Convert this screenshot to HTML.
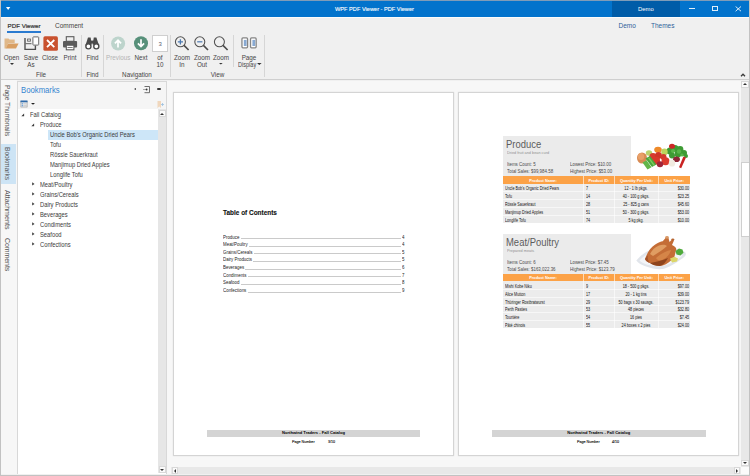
<!DOCTYPE html>
<html><head><meta charset="utf-8">
<style>
*{margin:0;padding:0;box-sizing:border-box}
html,body{width:750px;height:476px;overflow:hidden;background:#f0f0f0;font-family:"Liberation Sans",sans-serif;color:#444}
.a{position:absolute}
.t{position:absolute;white-space:nowrap;line-height:1}
#title{left:0;top:0;width:750px;height:16.5px;background:#0273cc;border-top:1px solid #7f9cb8}
.lbl{font-size:6.3px;color:#454545;text-align:center}
.sep{position:absolute;width:1px;background:#d6d6d6}
.tree{font-size:6.3px;color:#3a3a3a;transform:scaleX(.92);transform-origin:0 0}
</style></head><body>
<!-- window border -->
<div class="a" style="left:0;top:0;width:750px;height:476px;border:1px solid #c2c2c2;border-bottom-width:1.5px;border-top:none;z-index:10"></div>
<!-- title bar -->
<div class="a" id="title"></div>
<div class="a" style="left:611.7px;top:1px;width:68.7px;height:15.5px;background:#005ca8"></div>
<div class="a" style="left:1px;top:16.5px;width:748px;height:1px;background:#fbfbfb"></div>
<div class="t" style="left:335.4px;top:6.2px;font-size:6.2px;color:#fff;-webkit-text-stroke:.12px #fff;transform:scaleX(.91);transform-origin:0 0">WPF PDF Viewer - PDF Viewer</div>
<div class="t" style="left:638px;top:6.8px;font-size:5.9px;color:#fff">Demo</div>
<!-- quick access arrow -->
<svg class="a" style="left:6.2px;top:7.4px" width="5" height="4"><path d="M0 0h4.3L2.15 3z" fill="#fff"/></svg>
<!-- window controls -->
<div class="a" style="left:689.3px;top:8px;width:5.4px;height:.9px;background:rgba(255,255,255,.88)"></div>
<div class="a" style="left:712px;top:5.9px;width:5.9px;height:5px;border:.9px solid rgba(255,255,255,.88)"></div>
<svg class="a" style="left:735px;top:6px" width="7" height="6" viewBox="0 0 7 6"><path d="M.6 .5L6 5.2M6 .5L.6 5.2" stroke="rgba(255,255,255,.9)" stroke-width=".95"/></svg>

<!-- ribbon tabs -->
<div class="t" style="left:7.6px;top:22.8px;font-size:6.2px;color:#333;-webkit-text-stroke:.2px #333">PDF Viewer</div>
<div class="a" style="left:7.3px;top:31px;width:33.7px;height:1.6px;background:#2b7bd0"></div>
<div class="t" style="left:55px;top:22.8px;font-size:6.5px;color:#444">Comment</div>
<div class="t" style="left:618.5px;top:22.5px;font-size:6.5px;color:#2f5f9a">Demo</div>
<div class="t" style="left:651px;top:22.5px;font-size:6.5px;color:#2f5f9a">Themes</div>


<!-- RIBBON ICONS -->
<svg class="a" style="left:0;top:32px" width="270" height="24" viewBox="0 32 270 24">
 <!-- open folder -->
 <path d="M4.5 38.4h4l1 1.2h5.2v3.4H8.2L6 48.5H4.5z" fill="#e0b889"/>
 <path d="M8 43.5h10.6L16 48.5H5.8z" fill="#d99f62"/>
 <!-- save as -->
 <path d="M24.3 38.1h1.4v10.6h9v-3.2h1.4v4.6H24.3z" fill="#505050"/>
 <rect x="27.2" y="38.6" width="3.6" height="3" fill="#5a5a5a"/>
 <rect x="28.2" y="39.4" width="1.6" height="1.4" fill="#fff"/>
 <rect x="25.5" y="43.2" width="6" height="1" fill="#5a5a5a"/>
 <rect x="32.9" y="36.9" width="5.8" height="8.2" rx=".6" fill="#fff" stroke="#6a6a6a" stroke-width="1"/>
 <!-- close -->
 <rect x="43.4" y="36.3" width="14.5" height="14.5" rx="1.6" fill="#c9522f"/>
 <path d="M47 40l7.3 7.1M54.3 40L47 47.1" stroke="#fff" stroke-width="1.8"/>
 <!-- print -->
 <rect x="66.3" y="36.7" width="7.6" height="4.6" fill="none" stroke="#5c5c5c" stroke-width="1.1"/>
 <rect x="63" y="41" width="14.1" height="6.6" rx="1" fill="#5c5c5c"/>
 <rect x="66.3" y="45.2" width="7.6" height="4.6" fill="#fff" stroke="#5c5c5c" stroke-width="1.1"/>
 <rect x="67.5" y="47" width="5.2" height=".8" fill="#5c5c5c"/>
 <!-- binoculars -->
 <path d="M88 37.6h2.6l1.2 7-6.4.8z" fill="#4a4a4a"/>
 <path d="M93.8 37.6h2.6l2.6 7.8-6.4-.8z" fill="#4a4a4a"/>
 <rect x="90.8" y="40.6" width="3.2" height="3" fill="#4a4a4a"/>
 <circle cx="88.4" cy="46.3" r="2.55" fill="#fff" stroke="#4a4a4a" stroke-width="1.4"/>
 <circle cx="96.3" cy="46.3" r="2.55" fill="#fff" stroke="#4a4a4a" stroke-width="1.4"/>
 <!-- previous -->
 <circle cx="118.1" cy="43.5" r="7" fill="#bdd4cc"/>
 <path d="M118 47.6v-7M114.9 43.4l3.1-3.1 3.1 3.1" stroke="#fff" stroke-width="1.7" fill="none"/>
 <!-- next -->
 <circle cx="141" cy="43.3" r="7" fill="#57907a"/>
 <path d="M141 39.2v7M137.9 43.4l3.1 3.1 3.1-3.1" stroke="#fff" stroke-width="1.7" fill="none"/>
 <!-- page box -->
 <rect x="152.5" y="35.5" width="15" height="16" fill="#fff" stroke="#cfcfcf" stroke-width="1"/>
 <!-- zoom in -->
 <circle cx="180.4" cy="41.8" r="5" fill="none" stroke="#505050" stroke-width="1.05"/>
 <path d="M184 45.4l4.6 4.6" stroke="#4a4a4a" stroke-width="1.6"/>
 <path d="M180.4 39.2v5.2M177.8 41.8h5.2" stroke="#4a78b0" stroke-width="1.3"/>
 <!-- zoom out -->
 <circle cx="199.8" cy="41.8" r="5" fill="none" stroke="#505050" stroke-width="1.05"/>
 <path d="M203.4 45.4l4.6 4.6" stroke="#4a4a4a" stroke-width="1.6"/>
 <path d="M197.2 41.8h5.2" stroke="#5a82b4" stroke-width="1.3"/>
 <!-- zoom -->
 <circle cx="219.4" cy="41.8" r="5" fill="none" stroke="#505050" stroke-width="1.05"/>
 <path d="M223 45.4l4.6 4.6" stroke="#4a4a4a" stroke-width="1.6"/>
 <!-- page display -->
 <rect x="241.95" y="37.9" width="5.6" height="9.9" rx="1" fill="#fff" stroke="#858585" stroke-width="1.3"/>
 <rect x="250.55" y="37.9" width="5.6" height="9.9" rx="1" fill="#fff" stroke="#858585" stroke-width="1.3"/>
 <rect x="243.8" y="39.9" width="2.8" height="6.1" fill="#88a9d2"/>
 <rect x="252.4" y="39.9" width="2.8" height="6.1" fill="#88a9d2"/>
</svg>
<div class="t" style="left:158.4px;top:41px;font-size:6px;color:#5a6070">3</div>
<!-- separators -->
<div class="sep" style="left:81px;top:35px;height:42px"></div>
<div class="sep" style="left:103px;top:35px;height:42px"></div>
<div class="sep" style="left:170px;top:35px;height:42px"></div>
<div class="sep" style="left:233px;top:35px;height:32px"></div>
<div class="sep" style="left:264px;top:35px;height:42px"></div>
<!-- labels -->
<div class="t lbl" style="left:1px;width:21px;top:54.5px">Open</div>
<svg class="a" style="left:9.6px;top:62.9px" width="5" height="3"><path d="M0 0h4L2 2.1z" fill="#333"/></svg>
<div class="t lbl" style="left:21px;width:20px;top:54.5px">Save</div><div class="t lbl" style="left:21px;width:20px;top:61.5px">As</div>
<div class="t lbl" style="left:40px;width:20px;top:54.5px">Close</div>
<div class="t lbl" style="left:60px;width:20px;top:54.5px">Print</div>
<div class="t lbl" style="left:1px;width:80px;top:71.5px">File</div>
<div class="t lbl" style="left:82px;width:21px;top:54.5px">Find</div>
<div class="t lbl" style="left:82px;width:21px;top:71.5px">Find</div>
<div class="t lbl" style="left:106px;width:24px;top:54.5px;color:#b4b4b4">Previous</div>
<div class="t lbl" style="left:131px;width:20px;top:54.5px">Next</div>
<div class="t lbl" style="left:150px;width:20px;top:54.5px">of</div><div class="t lbl" style="left:150px;width:20px;top:61.5px">10</div>
<div class="t lbl" style="left:104px;width:66px;top:71.5px">Navigation</div>
<div class="t lbl" style="left:172px;width:20px;top:54.5px">Zoom</div><div class="t lbl" style="left:172px;width:20px;top:61.5px">In</div>
<div class="t lbl" style="left:192px;width:20px;top:54.5px">Zoom</div><div class="t lbl" style="left:192px;width:20px;top:61.5px">Out</div>
<div class="t lbl" style="left:211px;width:20px;top:54.5px">Zoom</div>
<svg class="a" style="left:219.3px;top:62.8px" width="4" height="3"><path d="M0 0h3.7L1.85 1.6z" fill="#333"/></svg>
<div class="t lbl" style="left:171px;width:93px;top:71.5px">View</div>
<div class="t lbl" style="left:236px;width:26px;top:54.5px">Page</div>
<div class="t lbl" style="left:238px;top:61.5px;text-align:left;transform:scaleX(.88);transform-origin:0 0">Display</div>
<svg class="a" style="left:256.5px;top:63.3px" width="5" height="3"><path d="M0 0h4.6L2.3 1.9z" fill="#333"/></svg>
<!-- collapse chevron -->
<svg class="a" style="left:739.5px;top:71.5px" width="7" height="6"><path d="M1 4.2L3 2.2 5 4.2" stroke="#3a3a3a" stroke-width="1.3" fill="none"/></svg>

<!-- ribbon bottom line -->
<div class="a" style="left:1px;top:79px;width:748px;height:1px;background:#cfcfcf"></div>


<!-- LEFT TAB STRIP -->
<div class="a" style="left:1px;top:80px;width:16px;height:394px;background:#f7f7f7"></div>
<div class="a" style="left:1px;top:143.5px;width:15px;height:40px;background:#cde4f5"></div>
<div class="t" style="left:4.5px;top:85px;font-size:6.6px;color:#555;transform-origin:0 0;transform:translate(5px,0) rotate(90deg)">Page Thumbnails</div>
<div class="t" style="left:4.5px;top:147px;font-size:6.6px;color:#555;transform-origin:0 0;transform:translate(5px,0) rotate(90deg)">Bookmarks</div>
<div class="t" style="left:4.5px;top:189.5px;font-size:7.1px;color:#555;transform-origin:0 0;transform:translate(5px,0) rotate(90deg)">Attachments</div>
<div class="t" style="left:4.5px;top:238px;font-size:6.9px;color:#555;transform-origin:0 0;transform:translate(5px,0) rotate(90deg)">Comments</div>

<!-- BOOKMARKS PANEL -->
<div class="a" style="left:17px;top:81px;width:150px;height:393px;border:1px solid #d8d8d8;border-bottom:none;background:#fff"></div>
<div class="a" style="left:18px;top:82px;width:148px;height:27px;background:#f5f5f5"></div>
<div class="t" style="left:20.5px;top:86.3px;font-size:8.6px;color:#3585d0;transform:scaleX(.9);transform-origin:0 0">Bookmarks</div>
<!-- header icons -->
<div class="a" style="left:133.8px;top:87.6px;border-top:1.6px solid transparent;border-bottom:1.6px solid transparent;border-right:2.2px solid #333"></div>
<svg class="a" style="left:142px;top:85px" width="10" height="9"><path d="M2.5 1.5h5v6.2h-5" fill="none" stroke="#606060" stroke-width=".9"/><path d="M1 4.5h4" stroke="#888" stroke-width=".7"/><circle cx="4.6" cy="4.5" r=".9" fill="#333"/></svg>
<div class="a" style="left:156.8px;top:88px;width:4.2px;height:2.4px;border-radius:1px;background:#3a3a3a"></div>
<!-- toolbar icon -->
<svg class="a" style="left:19.5px;top:99.5px" width="9" height="8" viewBox="0 0 9 8"><rect x=".5" y=".5" width="7" height="6.8" fill="#eeeeee"/><path d="M.8 1v6.2M7.2 1v6.2M.8 7.1h6.4" stroke="#9a9a9a" stroke-width=".6"/><rect x=".5" y=".5" width="7" height="1.8" fill="#2f6aaa"/><rect x="1.6" y="3.3" width="1.6" height="1.1" fill="#5b95d0"/><rect x="1.6" y="5.2" width="1.6" height="1.1" fill="#5b95d0"/><path d="M3.8 3.85h2.8M3.8 5.75h2.8" stroke="#b0b0b0" stroke-width=".6"/></svg>
<svg class="a" style="left:31px;top:102.6px" width="5" height="3"><path d="M0 0h4L2 1.7z" fill="#222"/></svg>
<svg class="a" style="left:156px;top:100px" width="9" height="9"><path d="M1.5 1h3.5v7L3.3 6.5 1.5 8z" fill="#f0d7bd"/><path d="M5 4.5h3M6.5 3v3" stroke="#9cc0e0" stroke-width=".8"/></svg>

<!-- panel scrollbar -->
<div class="a" style="left:158px;top:109px;width:8px;height:364px;background:#e6e6e6"></div>
<div class="a" style="left:158.5px;top:110px;width:7px;height:7px;background:#fafafa;border:.5px solid #d8d8d8"></div>
<div class="a" style="left:160px;top:112.5px;border-left:2px solid transparent;border-right:2px solid transparent;border-bottom:2px solid #333"></div>
<div class="a" style="left:158.5px;top:466px;width:7px;height:7px;background:#fafafa;border:.5px solid #d8d8d8"></div>
<div class="a" style="left:160px;top:468.5px;border-left:2px solid transparent;border-right:2px solid transparent;border-top:2px solid #333"></div>

<!-- tree -->
<div class="a" style="left:47.5px;top:130px;width:110.5px;height:9.5px;background:#cde6f8"></div>
<div class="t tree" style="left:29.6px;top:111.5px">Fall Catalog</div>
<div class="t tree" style="left:39.6px;top:121.5px">Produce</div>
<div class="t tree" style="left:49.6px;top:131.5px">Uncle Bob's Organic Dried Pears</div>
<div class="t tree" style="left:49.6px;top:141.5px">Tofu</div>
<div class="t tree" style="left:49.6px;top:151.5px">R&ouml;ssle Sauerkraut</div>
<div class="t tree" style="left:49.6px;top:161.5px">Manjimup Dried Apples</div>
<div class="t tree" style="left:49.6px;top:171.5px">Longlife Tofu</div>
<div class="t tree" style="left:39.6px;top:181.5px">Meat/Poultry</div>
<div class="t tree" style="left:39.6px;top:191.5px">Grains/Cereals</div>
<div class="t tree" style="left:39.6px;top:201.5px">Dairy Products</div>
<div class="t tree" style="left:39.6px;top:211.5px">Beverages</div>
<div class="t tree" style="left:39.6px;top:221.5px">Condiments</div>
<div class="t tree" style="left:39.6px;top:231.5px">Seafood</div>
<div class="t tree" style="left:39.6px;top:241.5px">Confections</div>

<svg class="a" style="left:21px;top:112.6px" width="4" height="4"><path d="M0.3 3.3L3.1 0.4V3.3z" fill="#3a3a3a"/></svg>
<svg class="a" style="left:31px;top:122.6px" width="4" height="4"><path d="M0.3 3.3L3.1 0.4V3.3z" fill="#3a3a3a"/></svg>
<svg class="a" style="left:31.6px;top:182.4px" width="4" height="5"><path d="M0.2 0.2L2.5 1.9 0.2 3.6z" fill="#3a3a3a"/></svg>
<svg class="a" style="left:31.6px;top:192.4px" width="4" height="5"><path d="M0.2 0.2L2.5 1.9 0.2 3.6z" fill="#3a3a3a"/></svg>
<svg class="a" style="left:31.6px;top:202.4px" width="4" height="5"><path d="M0.2 0.2L2.5 1.9 0.2 3.6z" fill="#3a3a3a"/></svg>
<svg class="a" style="left:31.6px;top:212.4px" width="4" height="5"><path d="M0.2 0.2L2.5 1.9 0.2 3.6z" fill="#3a3a3a"/></svg>
<svg class="a" style="left:31.6px;top:222.4px" width="4" height="5"><path d="M0.2 0.2L2.5 1.9 0.2 3.6z" fill="#3a3a3a"/></svg>
<svg class="a" style="left:31.6px;top:232.4px" width="4" height="5"><path d="M0.2 0.2L2.5 1.9 0.2 3.6z" fill="#3a3a3a"/></svg>
<svg class="a" style="left:31.6px;top:242.4px" width="4" height="5"><path d="M0.2 0.2L2.5 1.9 0.2 3.6z" fill="#3a3a3a"/></svg>
<!-- DOC AREA -->
<div class="a" style="left:167px;top:81px;width:582px;height:393px;background:#f7f7f7"></div>
<!-- v scrollbar -->
<div class="a" style="left:741px;top:81px;width:8px;height:386px;background:#e8e8e8"></div>
<div class="a" style="left:741px;top:80.5px;width:8px;height:7px;background:#fafafa;border:.5px solid #d8d8d8"></div>
<div class="a" style="left:743px;top:83px;border-left:2px solid transparent;border-right:2px solid transparent;border-bottom:2px solid #333"></div>
<div class="a" style="left:741px;top:162px;width:8.5px;height:74.5px;background:#fff;border:1px solid #cfcfcf"></div>
<div class="a" style="left:741px;top:459.5px;width:8px;height:6.5px;background:#fafafa;border:.5px solid #d8d8d8"></div>
<div class="a" style="left:743px;top:462px;border-left:2px solid transparent;border-right:2px solid transparent;border-top:2px solid #333"></div>
<!-- h scrollbar -->
<div class="a" style="left:171px;top:467px;width:570px;height:7px;background:#e8e8e8"></div>
<div class="a" style="left:171.5px;top:467px;width:6.5px;height:7px;background:#fafafa;border:.5px solid #d8d8d8"></div>
<div class="a" style="left:173.5px;top:468.5px;border-top:2px solid transparent;border-bottom:2px solid transparent;border-right:2px solid #333"></div>
<div class="a" style="left:733.5px;top:467px;width:6.5px;height:7px;background:#fafafa;border:.5px solid #d8d8d8"></div>
<div class="a" style="left:736px;top:468.5px;border-top:2px solid transparent;border-bottom:2px solid transparent;border-left:2px solid #333"></div>
<div class="a" style="left:741px;top:467px;width:8px;height:7px;background:#fbfbfb"></div>

<!-- PAGES -->
<div class="a" style="left:173px;top:92px;width:281px;height:364px;background:#fff;border:1px solid #d4d4d4;box-shadow:0 0 1.5px rgba(0,0,0,.1)"></div>
<div class="a" style="left:458px;top:92px;width:281px;height:364px;background:#fff;border:1px solid #d4d4d4;box-shadow:0 0 1.5px rgba(0,0,0,.1)"></div>
<!-- PAGE1CONTENT -->
<div class="t" style="left:223.00px;top:208.90px;font-size:7px;font-weight:bold;color:#111;transform:scaleX(0.92);transform-origin:0 0;-webkit-text-stroke:.12px #111">Table of Contents</div>
<div class="t" style="left:223.00px;top:234.50px;font-size:5.2px;font-weight:normal;color:#222;transform:scaleX(0.85);transform-origin:0 0;">Produce</div>
<div class="a" style="left:240.73px;top:238.20px;width:160.47px;height:.75px;background:#cacaca"></div>
<div class="t" style="left:401.60px;top:234.50px;font-size:5.2px;font-weight:normal;color:#222;transform:scaleX(0.85);transform-origin:0 0;">4</div>
<div class="t" style="left:223.00px;top:242.13px;font-size:5.2px;font-weight:normal;color:#222;transform:scaleX(0.85);transform-origin:0 0;">Meat/Poultry</div>
<div class="a" style="left:249.06px;top:245.83px;width:152.14px;height:.75px;background:#cacaca"></div>
<div class="t" style="left:401.60px;top:242.13px;font-size:5.2px;font-weight:normal;color:#222;transform:scaleX(0.85);transform-origin:0 0;">4</div>
<div class="t" style="left:223.00px;top:249.76px;font-size:5.2px;font-weight:normal;color:#222;transform:scaleX(0.85);transform-origin:0 0;">Grains/Cereals</div>
<div class="a" style="left:253.72px;top:253.46px;width:147.48px;height:.75px;background:#cacaca"></div>
<div class="t" style="left:401.60px;top:249.76px;font-size:5.2px;font-weight:normal;color:#222;transform:scaleX(0.85);transform-origin:0 0;">5</div>
<div class="t" style="left:223.00px;top:257.39px;font-size:5.2px;font-weight:normal;color:#222;transform:scaleX(0.85);transform-origin:0 0;">Dairy Products</div>
<div class="a" style="left:253.23px;top:261.09px;width:147.97px;height:.75px;background:#cacaca"></div>
<div class="t" style="left:401.60px;top:257.39px;font-size:5.2px;font-weight:normal;color:#222;transform:scaleX(0.85);transform-origin:0 0;">5</div>
<div class="t" style="left:223.00px;top:265.02px;font-size:5.2px;font-weight:normal;color:#222;transform:scaleX(0.85);transform-origin:0 0;">Beverages</div>
<div class="a" style="left:245.39px;top:268.72px;width:155.81px;height:.75px;background:#cacaca"></div>
<div class="t" style="left:401.60px;top:265.02px;font-size:5.2px;font-weight:normal;color:#222;transform:scaleX(0.85);transform-origin:0 0;">6</div>
<div class="t" style="left:223.00px;top:272.65px;font-size:5.2px;font-weight:normal;color:#222;transform:scaleX(0.85);transform-origin:0 0;">Condiments</div>
<div class="a" style="left:247.83px;top:276.35px;width:153.37px;height:.75px;background:#cacaca"></div>
<div class="t" style="left:401.60px;top:272.65px;font-size:5.2px;font-weight:normal;color:#222;transform:scaleX(0.85);transform-origin:0 0;">7</div>
<div class="t" style="left:223.00px;top:280.28px;font-size:5.2px;font-weight:normal;color:#222;transform:scaleX(0.85);transform-origin:0 0;">Seafood</div>
<div class="a" style="left:240.73px;top:283.98px;width:160.47px;height:.75px;background:#cacaca"></div>
<div class="t" style="left:401.60px;top:280.28px;font-size:5.2px;font-weight:normal;color:#222;transform:scaleX(0.85);transform-origin:0 0;">8</div>
<div class="t" style="left:223.00px;top:287.91px;font-size:5.2px;font-weight:normal;color:#222;transform:scaleX(0.85);transform-origin:0 0;">Confections</div>
<div class="a" style="left:247.60px;top:291.61px;width:153.60px;height:.75px;background:#cacaca"></div>
<div class="t" style="left:401.60px;top:287.91px;font-size:5.2px;font-weight:normal;color:#222;transform:scaleX(0.85);transform-origin:0 0;">9</div>
<div class="a" style="left:206.7px;top:430px;width:213.5px;height:6.6px;background:#d4d4d4"></div>
<div class="t" style="left:213.50px;width:200px;text-align:center;top:431.20px;font-size:4.1px;font-weight:bold;color:#000;">Northwind Traders - Fall Catalog</div>
<div class="t" style="left:292.00px;top:440.00px;font-size:4.2px;font-weight:normal;color:#000;transform:scaleX(0.876);transform-origin:0 0;-webkit-text-stroke:.1px #000">Page Number</div>
<div class="t" style="left:328.00px;top:440.00px;font-size:4.2px;font-weight:normal;color:#000;transform:scaleX(0.876);transform-origin:0 0;-webkit-text-stroke:.1px #000">3/10</div>
<!-- PAGE2CONTENT -->
<div class="a" style="left:502.5px;top:136.4px;width:128.5px;height:39.6px;background:#ebebeb"></div>
<div class="t" style="left:506.40px;top:138.70px;font-size:10.5px;font-weight:normal;color:#5c5c5c;transform:scaleX(0.9);transform-origin:0 0;">Produce</div>
<div class="t" style="left:506.70px;top:150.80px;font-size:4.4px;font-weight:normal;color:#909090;transform:scaleX(0.87);transform-origin:0 0;">Dried fruit and bean curd</div>
<div class="t" style="left:506.70px;top:161.60px;font-size:5.2px;font-weight:normal;color:#4a4a4a;transform:scaleX(0.85);transform-origin:0 0;">Items Count: 5</div>
<div class="t" style="left:506.70px;top:168.70px;font-size:5.2px;font-weight:normal;color:#4a4a4a;transform:scaleX(0.85);transform-origin:0 0;">Total Sales: $99,984.58</div>
<div class="t" style="left:570.10px;top:161.60px;font-size:5.2px;font-weight:normal;color:#4a4a4a;transform:scaleX(0.85);transform-origin:0 0;">Lowest Price: $10.00</div>
<div class="t" style="left:570.10px;top:168.70px;font-size:5.2px;font-weight:normal;color:#4a4a4a;transform:scaleX(0.85);transform-origin:0 0;">Highest Price: $53.00</div>
<div class="a" style="left:502.7px;top:176.0px;width:187.5px;height:46.85px;background:#ececec"></div>
<div class="a" style="left:502.7px;top:176.0px;width:187.5px;height:7.6px;background:#fca247"></div>
<div class="t" style="left:443.00px;width:200px;text-align:center;top:178.60px;font-size:3.9px;font-weight:bold;color:#fff;">Product Name:</div>
<div class="t" style="left:498.90px;width:200px;text-align:center;top:178.60px;font-size:3.9px;font-weight:bold;color:#fff;">Product ID:</div>
<div class="t" style="left:536.45px;width:200px;text-align:center;top:178.60px;font-size:3.9px;font-weight:bold;color:#fff;">Quantity Per Unit:</div>
<div class="t" style="left:574.30px;width:200px;text-align:center;top:178.60px;font-size:3.9px;font-weight:bold;color:#fff;">Unit Price:</div>
<div class="a" style="left:582.9px;top:176.0px;width:.8px;height:46.85px;background:rgba(255,255,255,.6)"></div>
<div class="a" style="left:614.1px;top:176.0px;width:.8px;height:46.85px;background:rgba(255,255,255,.6)"></div>
<div class="a" style="left:658.0px;top:176.0px;width:.8px;height:46.85px;background:rgba(255,255,255,.6)"></div>
<div class="t" style="left:505.30px;top:187.10px;font-size:4.7px;font-weight:normal;color:#111;transform:scaleX(0.79);transform-origin:0 0;">Uncle Bob's Organic Dried Pears</div>
<div class="t" style="left:585.90px;top:187.10px;font-size:4.7px;font-weight:normal;color:#111;transform:scaleX(0.79);transform-origin:0 0;">7</div>
<div class="t" style="left:536.45px;width:200px;text-align:center;top:187.10px;font-size:4.7px;font-weight:normal;color:#111;transform:scaleX(0.79);transform-origin:50% 0;">12 - 1 lb pkgs.</div>
<div class="t" style="left:488.60px;width:200px;text-align:right;top:187.10px;font-size:4.7px;font-weight:normal;color:#111;transform:scaleX(0.79);transform-origin:100% 0;">$30.00</div>
<div class="a" style="left:502.7px;top:191.10px;width:187.5px;height:.8px;background:rgba(255,255,255,.6)"></div>
<div class="t" style="left:505.30px;top:194.95px;font-size:4.7px;font-weight:normal;color:#111;transform:scaleX(0.79);transform-origin:0 0;">Tofu</div>
<div class="t" style="left:585.90px;top:194.95px;font-size:4.7px;font-weight:normal;color:#111;transform:scaleX(0.79);transform-origin:0 0;">14</div>
<div class="t" style="left:536.45px;width:200px;text-align:center;top:194.95px;font-size:4.7px;font-weight:normal;color:#111;transform:scaleX(0.79);transform-origin:50% 0;">40 - 100 g pkgs.</div>
<div class="t" style="left:488.60px;width:200px;text-align:right;top:194.95px;font-size:4.7px;font-weight:normal;color:#111;transform:scaleX(0.79);transform-origin:100% 0;">$23.25</div>
<div class="a" style="left:502.7px;top:198.95px;width:187.5px;height:.8px;background:rgba(255,255,255,.6)"></div>
<div class="t" style="left:505.30px;top:202.80px;font-size:4.7px;font-weight:normal;color:#111;transform:scaleX(0.79);transform-origin:0 0;">R&ouml;ssle Sauerkraut</div>
<div class="t" style="left:585.90px;top:202.80px;font-size:4.7px;font-weight:normal;color:#111;transform:scaleX(0.79);transform-origin:0 0;">28</div>
<div class="t" style="left:536.45px;width:200px;text-align:center;top:202.80px;font-size:4.7px;font-weight:normal;color:#111;transform:scaleX(0.79);transform-origin:50% 0;">25 - 825 g cans</div>
<div class="t" style="left:488.60px;width:200px;text-align:right;top:202.80px;font-size:4.7px;font-weight:normal;color:#111;transform:scaleX(0.79);transform-origin:100% 0;">$45.60</div>
<div class="a" style="left:502.7px;top:206.80px;width:187.5px;height:.8px;background:rgba(255,255,255,.6)"></div>
<div class="t" style="left:505.30px;top:210.65px;font-size:4.7px;font-weight:normal;color:#111;transform:scaleX(0.79);transform-origin:0 0;">Manjimup Dried Apples</div>
<div class="t" style="left:585.90px;top:210.65px;font-size:4.7px;font-weight:normal;color:#111;transform:scaleX(0.79);transform-origin:0 0;">51</div>
<div class="t" style="left:536.45px;width:200px;text-align:center;top:210.65px;font-size:4.7px;font-weight:normal;color:#111;transform:scaleX(0.79);transform-origin:50% 0;">50 - 300 g pkgs.</div>
<div class="t" style="left:488.60px;width:200px;text-align:right;top:210.65px;font-size:4.7px;font-weight:normal;color:#111;transform:scaleX(0.79);transform-origin:100% 0;">$53.00</div>
<div class="a" style="left:502.7px;top:214.65px;width:187.5px;height:.8px;background:rgba(255,255,255,.6)"></div>
<div class="t" style="left:505.30px;top:218.50px;font-size:4.7px;font-weight:normal;color:#111;transform:scaleX(0.79);transform-origin:0 0;">Longlife Tofu</div>
<div class="t" style="left:585.90px;top:218.50px;font-size:4.7px;font-weight:normal;color:#111;transform:scaleX(0.79);transform-origin:0 0;">74</div>
<div class="t" style="left:536.45px;width:200px;text-align:center;top:218.50px;font-size:4.7px;font-weight:normal;color:#111;transform:scaleX(0.79);transform-origin:50% 0;">5 kg pkg.</div>
<div class="t" style="left:488.60px;width:200px;text-align:right;top:218.50px;font-size:4.7px;font-weight:normal;color:#111;transform:scaleX(0.79);transform-origin:100% 0;">$10.00</div>
<svg class="a" style="left:625px;top:135px" width="70" height="40" viewBox="625 135 70 40">
<!-- parsley back -->
<g fill="#3e9b34">
<circle cx="670" cy="151" r="3.6"/><circle cx="675" cy="148.5" r="3.6"/><circle cx="680" cy="149.5" r="3.4"/><circle cx="684" cy="153" r="3"/><circle cx="678" cy="154" r="3.4"/><circle cx="672" cy="155.5" r="3"/><circle cx="686" cy="156" r="2"/>
</g>
<g fill="#58b548"><circle cx="673" cy="151" r="2"/><circle cx="679" cy="151.5" r="2.2"/><circle cx="682" cy="155" r="1.6"/></g>
<ellipse cx="672" cy="146.2" rx="3" ry="2.5" fill="#cc2727"/>
<!-- peppers -->
<ellipse cx="658" cy="149.8" rx="3.8" ry="3" fill="#ee8a2a"/>
<ellipse cx="664.5" cy="152" rx="3.2" ry="3.4" fill="#bcd65c"/>
<ellipse cx="649" cy="153" rx="3.2" ry="2.8" fill="#b8d36c"/>
<!-- onion -->
<ellipse cx="642" cy="158" rx="5" ry="5.6" fill="#d88a52"/>
<ellipse cx="641" cy="156.5" rx="3.2" ry="3.6" fill="#e8a068"/>
<!-- tomatoes -->
<circle cx="653" cy="156.5" r="3.6" fill="#d63a2c"/>
<circle cx="658.5" cy="155.5" r="3.4" fill="#cf3526"/>
<circle cx="663.5" cy="157" r="3" fill="#d23a2c"/>
<circle cx="656" cy="160.5" r="4" fill="#d8392a"/>
<circle cx="665.5" cy="161.2" r="4" fill="#dc3b2e"/>
<ellipse cx="660" cy="164.2" rx="3.2" ry="3" fill="#a0263a"/>
<ellipse cx="676.5" cy="159.2" rx="3.4" ry="2.8" fill="#8e2635"/>
<ellipse cx="672" cy="163.2" rx="3.2" ry="3.4" fill="#f0ebe0"/>
<!-- cucumbers -->
<path d="M645.5 158.5l4.5-2.4 6.4 8.4-4.4 2.6z" fill="#4aa63b"/>
<path d="M642.5 162.5l4-2.2 5 7-4 2.2z" fill="#62b548"/>
<path d="M648 158l1.2-.6 5.6 7.6-1.2.7z" fill="#7fca5e"/>
<!-- chili -->
<path d="M683.4 156.4l2.6 1.2-4.8 10.6-2.2-1z" fill="#c92322"/>
</svg>
<div class="a" style="left:502.5px;top:234.2px;width:128.5px;height:39.6px;background:#ebebeb"></div>
<div class="t" style="left:506.40px;top:236.50px;font-size:10.5px;font-weight:normal;color:#5c5c5c;transform:scaleX(0.9);transform-origin:0 0;">Meat/Poultry</div>
<div class="t" style="left:506.70px;top:248.60px;font-size:4.4px;font-weight:normal;color:#909090;transform:scaleX(0.87);transform-origin:0 0;">Prepared meats</div>
<div class="t" style="left:506.70px;top:260.10px;font-size:5.2px;font-weight:normal;color:#4a4a4a;transform:scaleX(0.85);transform-origin:0 0;">Items Count: 6</div>
<div class="t" style="left:506.70px;top:267.20px;font-size:5.2px;font-weight:normal;color:#4a4a4a;transform:scaleX(0.85);transform-origin:0 0;">Total Sales: $163,022.36</div>
<div class="t" style="left:570.10px;top:260.10px;font-size:5.2px;font-weight:normal;color:#4a4a4a;transform:scaleX(0.85);transform-origin:0 0;">Lowest Price: $7.45</div>
<div class="t" style="left:570.10px;top:267.20px;font-size:5.2px;font-weight:normal;color:#4a4a4a;transform:scaleX(0.85);transform-origin:0 0;">Highest Price: $123.79</div>
<div class="a" style="left:502.7px;top:273.8px;width:187.5px;height:54.699999999999996px;background:#ececec"></div>
<div class="a" style="left:502.7px;top:273.8px;width:187.5px;height:7.6px;background:#fca247"></div>
<div class="t" style="left:443.00px;width:200px;text-align:center;top:276.40px;font-size:3.9px;font-weight:bold;color:#fff;">Product Name:</div>
<div class="t" style="left:498.90px;width:200px;text-align:center;top:276.40px;font-size:3.9px;font-weight:bold;color:#fff;">Product ID:</div>
<div class="t" style="left:536.45px;width:200px;text-align:center;top:276.40px;font-size:3.9px;font-weight:bold;color:#fff;">Quantity Per Unit:</div>
<div class="t" style="left:574.30px;width:200px;text-align:center;top:276.40px;font-size:3.9px;font-weight:bold;color:#fff;">Unit Price:</div>
<div class="a" style="left:582.9px;top:273.8px;width:.8px;height:54.699999999999996px;background:rgba(255,255,255,.6)"></div>
<div class="a" style="left:614.1px;top:273.8px;width:.8px;height:54.699999999999996px;background:rgba(255,255,255,.6)"></div>
<div class="a" style="left:658.0px;top:273.8px;width:.8px;height:54.699999999999996px;background:rgba(255,255,255,.6)"></div>
<div class="t" style="left:505.30px;top:284.90px;font-size:4.7px;font-weight:normal;color:#111;transform:scaleX(0.79);transform-origin:0 0;">Mishi Kobe Niku</div>
<div class="t" style="left:585.90px;top:284.90px;font-size:4.7px;font-weight:normal;color:#111;transform:scaleX(0.79);transform-origin:0 0;">9</div>
<div class="t" style="left:536.45px;width:200px;text-align:center;top:284.90px;font-size:4.7px;font-weight:normal;color:#111;transform:scaleX(0.79);transform-origin:50% 0;">18 - 500 g pkgs.</div>
<div class="t" style="left:488.60px;width:200px;text-align:right;top:284.90px;font-size:4.7px;font-weight:normal;color:#111;transform:scaleX(0.79);transform-origin:100% 0;">$97.00</div>
<div class="a" style="left:502.7px;top:288.90px;width:187.5px;height:.8px;background:rgba(255,255,255,.6)"></div>
<div class="t" style="left:505.30px;top:292.75px;font-size:4.7px;font-weight:normal;color:#111;transform:scaleX(0.79);transform-origin:0 0;">Alice Mutton</div>
<div class="t" style="left:585.90px;top:292.75px;font-size:4.7px;font-weight:normal;color:#111;transform:scaleX(0.79);transform-origin:0 0;">17</div>
<div class="t" style="left:536.45px;width:200px;text-align:center;top:292.75px;font-size:4.7px;font-weight:normal;color:#111;transform:scaleX(0.79);transform-origin:50% 0;">20 - 1 kg tins</div>
<div class="t" style="left:488.60px;width:200px;text-align:right;top:292.75px;font-size:4.7px;font-weight:normal;color:#111;transform:scaleX(0.79);transform-origin:100% 0;">$39.00</div>
<div class="a" style="left:502.7px;top:296.75px;width:187.5px;height:.8px;background:rgba(255,255,255,.6)"></div>
<div class="t" style="left:505.30px;top:300.60px;font-size:4.7px;font-weight:normal;color:#111;transform:scaleX(0.79);transform-origin:0 0;">Th&uuml;ringer Rostbratwurst</div>
<div class="t" style="left:585.90px;top:300.60px;font-size:4.7px;font-weight:normal;color:#111;transform:scaleX(0.79);transform-origin:0 0;">29</div>
<div class="t" style="left:536.45px;width:200px;text-align:center;top:300.60px;font-size:4.7px;font-weight:normal;color:#111;transform:scaleX(0.79);transform-origin:50% 0;">50 bags x 30 sausgs.</div>
<div class="t" style="left:488.60px;width:200px;text-align:right;top:300.60px;font-size:4.7px;font-weight:normal;color:#111;transform:scaleX(0.79);transform-origin:100% 0;">$123.79</div>
<div class="a" style="left:502.7px;top:304.60px;width:187.5px;height:.8px;background:rgba(255,255,255,.6)"></div>
<div class="t" style="left:505.30px;top:308.45px;font-size:4.7px;font-weight:normal;color:#111;transform:scaleX(0.79);transform-origin:0 0;">Perth Pasties</div>
<div class="t" style="left:585.90px;top:308.45px;font-size:4.7px;font-weight:normal;color:#111;transform:scaleX(0.79);transform-origin:0 0;">53</div>
<div class="t" style="left:536.45px;width:200px;text-align:center;top:308.45px;font-size:4.7px;font-weight:normal;color:#111;transform:scaleX(0.79);transform-origin:50% 0;">48 pieces</div>
<div class="t" style="left:488.60px;width:200px;text-align:right;top:308.45px;font-size:4.7px;font-weight:normal;color:#111;transform:scaleX(0.79);transform-origin:100% 0;">$32.80</div>
<div class="a" style="left:502.7px;top:312.45px;width:187.5px;height:.8px;background:rgba(255,255,255,.6)"></div>
<div class="t" style="left:505.30px;top:316.30px;font-size:4.7px;font-weight:normal;color:#111;transform:scaleX(0.79);transform-origin:0 0;">Tourti&egrave;re</div>
<div class="t" style="left:585.90px;top:316.30px;font-size:4.7px;font-weight:normal;color:#111;transform:scaleX(0.79);transform-origin:0 0;">54</div>
<div class="t" style="left:536.45px;width:200px;text-align:center;top:316.30px;font-size:4.7px;font-weight:normal;color:#111;transform:scaleX(0.79);transform-origin:50% 0;">16 pies</div>
<div class="t" style="left:488.60px;width:200px;text-align:right;top:316.30px;font-size:4.7px;font-weight:normal;color:#111;transform:scaleX(0.79);transform-origin:100% 0;">$7.45</div>
<div class="a" style="left:502.7px;top:320.30px;width:187.5px;height:.8px;background:rgba(255,255,255,.6)"></div>
<div class="t" style="left:505.30px;top:324.15px;font-size:4.7px;font-weight:normal;color:#111;transform:scaleX(0.79);transform-origin:0 0;">P&acirc;t&eacute; chinois</div>
<div class="t" style="left:585.90px;top:324.15px;font-size:4.7px;font-weight:normal;color:#111;transform:scaleX(0.79);transform-origin:0 0;">55</div>
<div class="t" style="left:536.45px;width:200px;text-align:center;top:324.15px;font-size:4.7px;font-weight:normal;color:#111;transform:scaleX(0.79);transform-origin:50% 0;">24 boxes x 2 pies</div>
<div class="t" style="left:488.60px;width:200px;text-align:right;top:324.15px;font-size:4.7px;font-weight:normal;color:#111;transform:scaleX(0.79);transform-origin:100% 0;">$24.00</div>
<svg class="a" style="left:625px;top:230px" width="70" height="45" viewBox="625 230 70 45">
<path d="M636.3 260.6C640 256 646 251 652 249.2 662 246.5 676 247 684 251.5 687 253 686 256 683 258 676 263 668 268 662.7 269 654 270 640 266 636.3 260.6z" fill="#e1e5eb"/>
<path d="M639.5 260.5C643 256.5 648 253 654 251.5 663 249.5 675 250 681 253 683 254.5 682 256.5 679 258.5 673 262.5 667 265.5 661.5 266 654 267 643 264.5 639.5 260.5z" fill="#f3f5f8"/>
<path d="M645 259C647 253 651 247 655.2 244.6 658 242.5 661 241.2 662.7 241.2L666 237.5 668.5 238 669.5 242 672 239.5 674 240.5 672 245C675 246.5 676.5 248 676.2 249.6L674.5 256.4C671 261 667 264 662.7 265.6 658 266.5 653 265 650 263 647.5 262 645.5 261 645 259z" fill="#c46d36"/>
<path d="M650 254C652 250 655 247 659 245.5 662 244.5 665 244.5 667 246 664 249 659 252 653 256z" fill="#e09d62"/>
<path d="M656 258C660 254 666 251 671 250 670 254 667 258 662 260 659 261 657 260 656 258z" fill="#d58548"/>
<path d="M650 263C655 262 661 261 668 258 666 262 663 265 660 266 656 266 652 265 650 263z" fill="#8e441d"/>
<path d="M645 259C646 261 648 262.5 650 263 648 261 647 258 648 255z" fill="#a2522a"/>
<ellipse cx="667" cy="237.3" rx="1.8" ry="1.4" fill="#d99a68"/>
<ellipse cx="672.8" cy="239.6" rx="1.5" ry="1.2" fill="#b66530"/>
<path d="M675.5 251l3.5-2.6 3.5 1 1 3.4-3 2.6-4 -1z" fill="#4faa3c"/>
<path d="M670 258.5l4.5-1.8 3.5 1.8-1 3-5 1z" fill="#dcd668"/>
</svg>
<div class="a" style="left:491.8px;top:430px;width:213.8px;height:6.6px;background:#d4d4d4"></div>
<div class="t" style="left:498.70px;width:200px;text-align:center;top:431.20px;font-size:4.1px;font-weight:bold;color:#000;">Northwind Traders - Fall Catalog</div>
<div class="t" style="left:576.60px;top:440.00px;font-size:4.2px;font-weight:normal;color:#000;transform:scaleX(0.876);transform-origin:0 0;-webkit-text-stroke:.1px #000">Page Number</div>
<div class="t" style="left:612.00px;top:440.00px;font-size:4.2px;font-weight:normal;color:#000;transform:scaleX(0.876);transform-origin:0 0;-webkit-text-stroke:.1px #000">4/10</div>
<!-- /PAGE2 --><!-- /PAGE2 -->
</body></html>
